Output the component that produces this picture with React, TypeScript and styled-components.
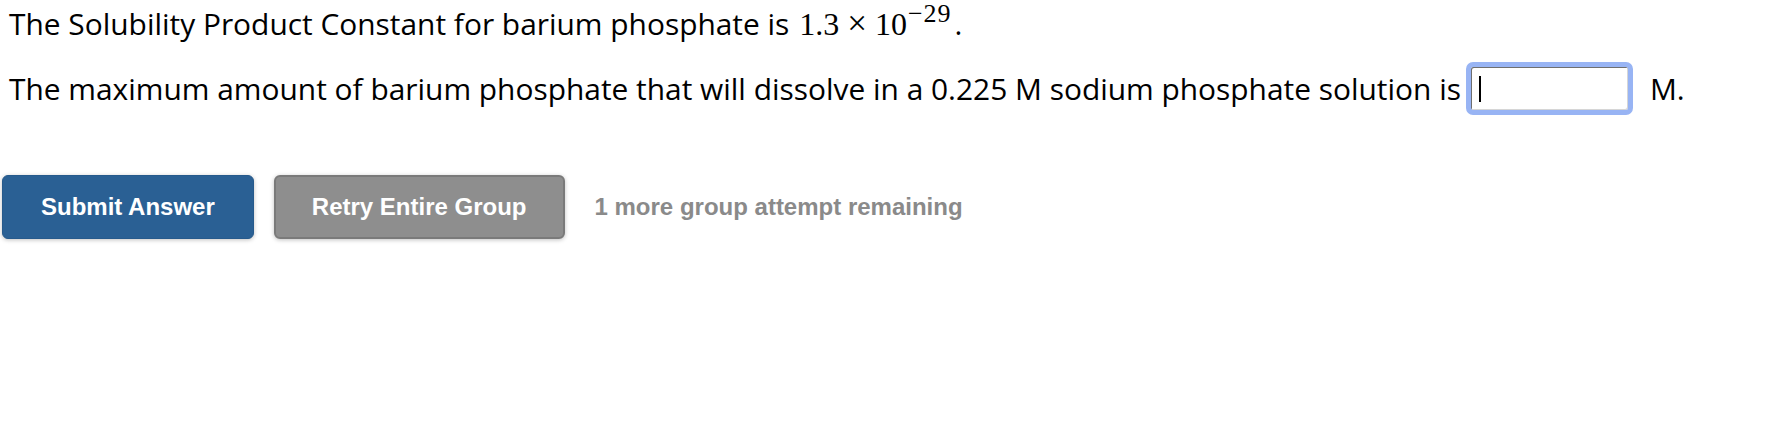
import React from "react"
import styled, { createGlobalStyle } from "styled-components"

const Global = createGlobalStyle`
  html, body {
    margin: 0;
    padding: 0;
    background: #ffffff;
  }
  body {
    font-family: "Open Sans", "Noto Sans", sans-serif;
    color: #000000;
  }
`

export default function App() {
  return (
    <>
      <Global />
      <Page>
        <Question>
          <Line>
            The Solubility Product Constant for barium phosphate is{" "}
            <MathExpr>
              1.3<Times>×</Times>10<Sup>−29</Sup>
            </MathExpr>
            .
          </Line>
          <Line>
            The maximum amount of barium phosphate that will dissolve in a 0.225 M sodium phosphate solution is
            <Field>
              <Caret />
            </Field>
            <Unit>M.</Unit>
          </Line>
        </Question>
        <Actions>
          <Button variant="primary">Submit Answer</Button>
          <Button variant="secondary">Retry Entire Group</Button>
          <Attempts>1 more group attempt remaining</Attempts>
        </Actions>
      </Page>
    </>
  )
}

//---------------------------STYLES-------------------------------------------//

const Page = styled.div`
  display: flex;
  flex-direction: column;
  width: 1790px;
  height: 448px;
`

const Question = styled.div`
  display: flex;
  flex-direction: column;
  gap: 18px;
  padding: 2px 0 0 9px;
  font-size: 29.9px;
`

const Line = styled.p`
  margin: 0;
  display: flex;
  align-items: center;
  white-space: pre;
  min-height: 42px;
`

const MathExpr = styled.span`
  display: inline-flex;
  align-items: baseline;
  font-family: "Liberation Serif", "DejaVu Serif", serif;
  font-size: 32px;
  line-height: 1;
  margin-left: 2px;
  margin-right: 3px;
`

const Times = styled.span`
  margin: 0 8px;
  font-size: 35px;
`

const Sup = styled.span`
  font-size: 26px;
  line-height: 1;
  position: relative;
  top: -13px;
  margin-left: 1px;
  letter-spacing: 1px;
`

const Field = styled.span`
  display: inline-flex;
  align-items: center;
  box-sizing: border-box;
  width: 167px;
  height: 53px;
  margin-left: 5px;
  border: 5px solid #98b4f4;
  border-radius: 7px;
  box-shadow: inset 1px 1px 0 #6f6f6f, inset -1px -1px 0 #d6d6d6;
  padding-left: 8px;
`

const Caret = styled.span`
  width: 2px;
  height: 26px;
  background: #000000;
`

const Unit = styled.span`
  margin-left: 17px;
`

const Actions = styled.div`
  display: flex;
  align-items: center;
  gap: 20px;
  margin-top: 60px;
  padding-left: 2px;
`

interface IButton {
  variant: "primary" | "secondary"
}

const Button = styled.button<IButton>`
  box-sizing: border-box;
  height: 64px;
  padding: 0 ${p => (p.variant === "primary" ? "38px" : "36px")};
  font-family: "Liberation Sans", Arial, sans-serif;
  font-weight: bold;
  font-size: 24px;
  color: #ffffff;
  border-radius: 6px;
  border: ${p => (p.variant === "primary" ? "1px solid #265a8c" : "2px solid #7a7a7a")};
  background: ${p => (p.variant === "primary" ? "#2a6094" : "#8e8e8e")};
  box-shadow: 0 1px 4px rgba(0, 0, 0, 0.25);
  cursor: pointer;
`

const Attempts = styled.span`
  margin-left: 10px;
  font-family: "Liberation Sans", Arial, sans-serif;
  font-weight: bold;
  font-size: 24px;
  color: #8a8a8a;
`
